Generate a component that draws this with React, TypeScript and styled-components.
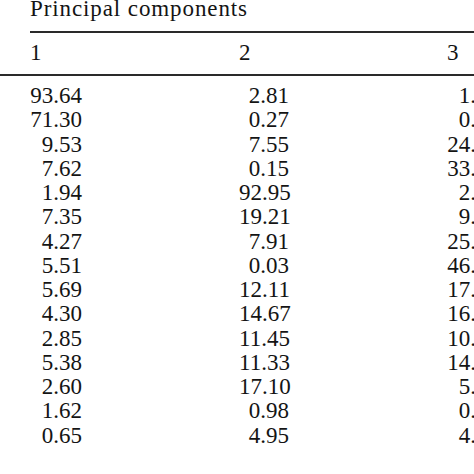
import styled, { createGlobalStyle } from "styled-components";

const GlobalStyle = createGlobalStyle`
  html, body {
    margin: 0;
    padding: 0;
    background: #ffffff;
    overflow: hidden;
  }
`;

const Page = styled.div`
  width: 474px;
  height: 474px;
  overflow: hidden;
  font-family: "Liberation Serif", "Times New Roman", serif;
  font-size: 23px;
  color: #141414;
`;

const Caption = styled.div`
  margin-left: 30px;
  line-height: 18px;
  letter-spacing: 0.9px;
  padding-bottom: 13px;
  border-bottom: 2px solid #2a2a2a;
  white-space: nowrap;
`;

const Row = styled.div<{ $head?: boolean }>`
  display: grid;
  grid-template-columns: 209px 208px 209px;
  padding-left: 30px;
  line-height: 24.27px;
  white-space: nowrap;
  ${(p) =>
    p.$head &&
    `
    padding-top: 8px;
    padding-bottom: 9px;
    border-bottom: 2px solid #2a2a2a;
    line-height: 24px;
  `}
`;

const Body = styled.div`
  padding-top: 8px;
`;

const HeadCell = styled.div`
  text-align: left;
`;

const Num = styled.div<{ $w: number }>`
  width: ${(p) => p.$w}px;
  text-align: right;
`;

const widths = [52, 50, 52];

const data: string[][] = [
  ["93.64", "2.81", "1.12"],
  ["71.30", "0.27", "0.58"],
  ["9.53", "7.55", "24.36"],
  ["7.62", "0.15", "33.14"],
  ["1.94", "92.95", "2.03"],
  ["7.35", "19.21", "9.47"],
  ["4.27", "7.91", "25.60"],
  ["5.51", "0.03", "46.22"],
  ["5.69", "12.11", "17.85"],
  ["4.30", "14.67", "16.09"],
  ["2.85", "11.45", "10.73"],
  ["5.38", "11.33", "14.51"],
  ["2.60", "17.10", "5.28"],
  ["1.62", "0.98", "0.44"],
  ["0.65", "4.95", "4.67"],
];

export default function App() {
  return (
    <Page>
      <GlobalStyle />
      <Caption>Principal components</Caption>
      <Row $head>
        <HeadCell>1</HeadCell>
        <HeadCell>2</HeadCell>
        <HeadCell>3</HeadCell>
      </Row>
      <Body>
        {data.map((r, i) => (
          <Row key={i}>
            {r.map((v, j) => (
              <Num key={j} $w={widths[j]}>
                {v}
              </Num>
            ))}
          </Row>
        ))}
      </Body>
    </Page>
  );
}
